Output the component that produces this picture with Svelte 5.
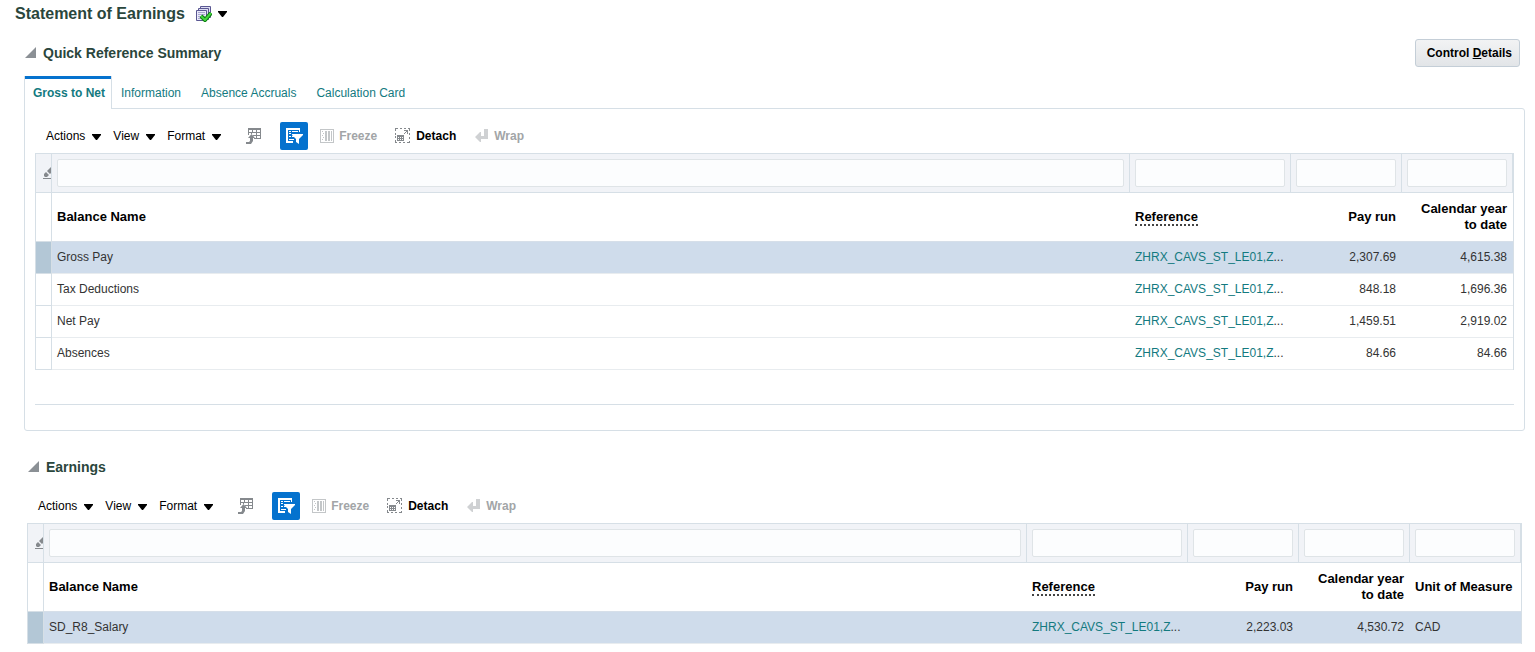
<script>
  const tabs = [
    "Gross to Net",
    "Information",
    "Absence Accruals",
    "Calculation Card",
  ];

  const menus = ["Actions", "View", "Format"];

  const baseColumns = [
    { key: "name", label: "Balance Name", kind: "name" },
    { key: "reference", label: "Reference", kind: "reference" },
    { key: "run", label: "Pay run", kind: "amount" },
    { key: "ytd", label: "Calendar year to date", kind: "amount" },
  ];

  const summary = {
    id: "summary",
    columns: baseColumns,
    rows: [
      { name: "Gross Pay", run: "2,307.69", ytd: "4,615.38" },
      { name: "Tax Deductions", run: "848.18", ytd: "1,696.36" },
      { name: "Net Pay", run: "1,459.51", ytd: "2,919.02" },
      { name: "Absences", run: "84.66", ytd: "84.66" },
    ],
  };

  const earnings = {
    id: "earnings",
    columns: [
      ...baseColumns,
      { key: "unit", label: "Unit of Measure", kind: "unit" },
    ],
    rows: [
      { name: "SD_R8_Salary", run: "2,223.03", ytd: "4,530.72", unit: "CAD" },
    ],
  };

  let activeTab = $state(tabs[0]);
  let selected = $state({ summary: 0, earnings: 0 });
</script>

{#snippet caret()}
  <svg class="caret" width="9" height="6" viewBox="0 0 9 6" aria-hidden="true">
    <path d="M0 0h9v1L5 6H4L0 1z" />
  </svg>
{/snippet}

{#snippet heading(title)}
  <h2>
    <button class="disclosure" aria-label="Collapse {title}">
      <svg width="11" height="11" viewBox="0 0 11 11">
        <path d="M0 11L11 0v11z" fill="#8b9095" />
      </svg>
    </button>
    {title}
  </h2>
{/snippet}

{#snippet toolbar()}
  <div class="toolbar">
    {#each menus as menu}
      <button class="menu">{menu}{@render caret()}</button>
    {/each}
    <button class="export" aria-label="Export">
      <svg width="16" height="16" viewBox="0 0 16 16">
        <path
          d="M2 0h13v11H8v-1h2V8H7V7h3V5H6v1H5V5H3v2H2zM3 2v2h3V2zM7 2v2h3V2zM11 2v2h3V2zM11 5v2h3V5zM11 8v2h3V8z"
          fill="#85898d"
          fill-rule="evenodd"
        />
        <path d="M5.5 6L9 10H7v3l-2 3H0v-2h3l1-1v-3H2z" fill="#85898d" />
      </svg>
    </button>
    <button class="query" aria-label="Query by Example" aria-pressed="true">
      <svg width="17" height="16" viewBox="0 0 17 16">
        <path
          d="M0 0h14v4h-1V2H2v11h5v2H0zM3 3h2v1H3zM6 3h6v1H6zM3 5h2v1H3zM3 8h2v1H3zM6 8h2v1H6zM3 11h5v1H3z"
          fill="#fff"
        />
        <path d="M6 6h11v1l-4 4v5l-3-2v-3L6 7z" fill="#fff" />
      </svg>
    </button>
    <button class="tool" disabled>
      <svg width="14" height="14" viewBox="0 0 14 14" shape-rendering="crispEdges">
        <path d="M.5.5h13v13H.5z" fill="none" stroke="#c3c6c8" />
        <path
          d="M2 2h1v1H2zM3 4h1v1H3zM2 6h1v1H2zM3 8h1v1H3zM2 10h1v1H2zM5 2h2v10H5zM8 2h2v10H8zM11 2h1v10h-1z"
          fill="#c3c6c8"
        />
      </svg>
      Freeze
    </button>
    <button class="tool">
      <svg width="16" height="16" viewBox="0 0 16 16" shape-rendering="crispEdges">
        <path
          d="M0 0h3v1H1v2H0zM5 0h2v1H5zM9 0h2v1H9zM13 0h2v3h-1V1h-1zM14 5h1v2h-1zM14 9h1v2h-1zM14 13h1v2h-3v-1h2zM8 14h2v1H8zM4 14h2v1H4zM0 12h1v2h1v1H0zM0 8h1v2H0zM0 5h1v2H0z"
          fill="#85898d"
        />
        <path
          d="M2 7h7v6H2zM3 9v1h1V9zM5 9v1h1V9zM7 9v1h1V9zM3 11v1h1v-1zM5 11v1h1v-1zM7 11v1h1v-1z"
          fill="#85898d"
          fill-rule="evenodd"
        />
        <path d="M9 2h4v4h-1V4h-1v1h-1v1H9V5h1V4h1V3H9z" fill="#85898d" />
      </svg>
      Detach
    </button>
    <button class="tool" disabled>
      <svg width="15" height="14" viewBox="0 0 15 14">
        <path d="M10 0h4v10H7v3H6L1 8l5-5h1v4h3z" fill="#cfd1d3" />
      </svg>
      Wrap
    </button>
  </div>
{/snippet}

{#snippet balanceTable(table)}
  <table>
    <colgroup>
      <col class="gutter-col" />
      {#each table.columns as column}
        <col class="{column.kind}-col" />
      {/each}
    </colgroup>
    <thead>
      <tr class="filters">
        <td class="gutter">
          <button class="clear" aria-label="Clear filters">
            <svg width="14" height="12" viewBox="0 0 14 12">
              <path d="M0 11h9v1H0z" fill="#85898d" />
              <path
                d="M1 7l2-2 3 3-2 2H2L1 9zM4 4l5-5 3 3-5 5z"
                fill="#85898d"
              />
            </svg>
          </button>
        </td>
        {#each table.columns as column}
          <td><input type="text" aria-label="Filter by {column.label}" /></td>
        {/each}
      </tr>
      <tr class="labels">
        <td class="gutter"></td>
        {#each table.columns as column}
          <th class={column.kind} scope="col"><span>{column.label}</span></th>
        {/each}
      </tr>
    </thead>
    <tbody>
      {#each table.rows as row, i}
        <tr
          class:selected={selected[table.id] === i}
          onclick={() => (selected[table.id] = i)}
        >
          <td class="gutter"></td>
          {#each table.columns as column}
            <td class={column.kind}>
              {#if column.kind === "reference"}
                <a href="#reference">ZHRX_CAVS_ST_LE01,Z</a>...
              {:else}
                {row[column.key]}
              {/if}
            </td>
          {/each}
        </tr>
      {/each}
    </tbody>
  </table>
{/snippet}

<main>
  <header>
    <h1>Statement of Earnings</h1>
    <button class="report" aria-label="Report options">
      <svg width="16" height="16" viewBox="0 0 16 16">
        <path d="M4.5.5h10v11h-10z" fill="#dcdcf2" stroke="#5a5792" />
        <path d="M2.5 2.5h10v11h-10z" fill="#dcdcf2" stroke="#5a5792" />
        <path d="M.5 4.5h10v10H.5z" fill="#e9e9f9" stroke="#5a5792" />
        <path
          d="M2 6.5h7M2 8.5h7M2 10.5h7M2 12.500h7"
          stroke="#a9a7d0"
        />
        <path
          d="M5 10l4 4 6-7"
          fill="none"
          stroke="#0b7a10"
          stroke-width="4"
        />
        <path
          d="M5 10l4 4 6-7"
          fill="none"
          stroke="#43d63d"
          stroke-width="2"
        />
      </svg>
      {@render caret()}
    </button>
  </header>

  <section class="summary">
    <div class="section-head">
      {@render heading("Quick Reference Summary")}
      <button class="details">Control <u>D</u>etails</button>
    </div>
    <div class="tabs" role="tablist">
      {#each tabs as tab}
        <button
          role="tab"
          class:active={activeTab === tab}
          aria-selected={activeTab === tab}
          onclick={() => (activeTab = tab)}
        >
          {tab}
        </button>
      {/each}
    </div>
    <div class="panel">
      {@render toolbar()}
      {@render balanceTable(summary)}
      <div class="status"></div>
    </div>
  </section>

  <section class="earnings">
    {@render heading("Earnings")}
    {@render toolbar()}
    {@render balanceTable(earnings)}
  </section>
</main>

<style>
  :global(body) {
    background: #fff;
  }

  main {
    font-family: "Liberation Sans", Arial, sans-serif;
    font-size: 12px;
    line-height: 16px;
    color: #333;
    padding-bottom: 8px;
  }

  button {
    font: inherit;
    color: #000;
    background: none;
    border: 0;
    padding: 0;
    cursor: pointer;
  }

  svg {
    display: block;
    flex: none;
  }

  header {
    display: flex;
    align-items: center;
    gap: 11px;
    height: 28px;
    padding-left: 15px;
  }

  h1,
  h2 {
    margin: 0;
    color: #2a463c;
    font-weight: bold;
  }

  h1 {
    font-size: 16px;
    line-height: 20px;
  }

  h2 {
    display: flex;
    align-items: center;
    gap: 7px;
    font-size: 14px;
    line-height: 20px;
  }

  .report {
    display: flex;
    align-items: center;
    gap: 6px;
  }

  .summary {
    padding: 11px 10px 0 24px;
  }

  .section-head {
    display: flex;
    justify-content: space-between;
    align-items: center;
    padding: 0 5px 0 1px;
  }

  .disclosure {
    margin-bottom: 2px;
  }

  .details {
    height: 28px;
    padding: 0 7px 0 11px;
    font-weight: bold;
    background: linear-gradient(#f2f3f4, #e2e5e8);
    border: 1px solid #c4ced7;
    border-radius: 3px;
  }

  .tabs {
    display: flex;
    align-items: stretch;
    height: 32px;
    margin-top: 9px;
  }

  .tabs button {
    height: 33px;
    padding: 0 11px 0 9px;
    color: #137a7f;
  }

  .tabs .active {
    position: relative;
    padding: 0 6px 0 8px;
    font-weight: bold;
    background: #fff;
    border: solid #d6dfe6;
    border-width: 0 1px;
    box-shadow: inset 0 3px #0572ce;
  }

  .panel {
    padding: 13px 10px 25px;
    border: 1px solid #d6dfe6;
    border-radius: 0 3px 3px 3px;
  }

  .status {
    height: 34px;
    border-bottom: 1px solid #d6dfe6;
  }

  .toolbar {
    display: flex;
    align-items: center;
    gap: 12px;
    height: 28px;
    margin-bottom: 3px;
    padding-left: 11px;
  }

  .menu {
    display: flex;
    align-items: center;
    gap: 7px;
  }

  .menu .caret {
    margin-top: 2px;
  }

  .export {
    margin-left: 13px;
  }

  .query {
    display: grid;
    place-items: center;
    width: 28px;
    height: 28px;
    margin-left: 6px;
    background: #0572ce;
    border-radius: 2px;
  }

  .tool {
    display: flex;
    align-items: center;
    gap: 5px;
    margin-right: 6px;
    font-weight: bold;
  }

  .tool:disabled {
    color: #a2a5a7;
    cursor: default;
  }

  table {
    width: 100%;
    table-layout: fixed;
    border: solid #d6dfe6;
    border-width: 1px 1px 0;
    border-collapse: separate;
    border-spacing: 0;
  }

  .gutter-col {
    width: 16px;
  }

  .reference-col {
    width: 161px;
  }

  .amount-col,
  .unit-col {
    width: 111px;
  }

  td,
  th {
    box-sizing: border-box;
    padding: 0 5px;
    text-align: left;
    white-space: nowrap;
  }

  td.gutter {
    padding: 0;
    overflow: hidden;
    border-right: 1px solid #d6dfe6;
    border-bottom: 1px solid #d6dfe6;
  }

  .clear {
    display: block;
    margin-left: 7px;
  }

  .filters td {
    height: 39px;
    background: #f1f3f7;
    border-right: 1px solid #d6dfe6;
    border-bottom: 1px solid #d6dfe6;
  }

  input {
    display: block;
    box-sizing: border-box;
    width: 100%;
    height: 28px;
    padding: 0 5px;
    font: inherit;
    background: #fcfdfe;
    border: 1px solid #dfe4e7;
    border-radius: 2px;
  }

  th {
    height: 49px;
    font-size: 13px;
    color: #000;
    border-bottom: 1px solid #d6dfe9;
  }

  th.amount {
    white-space: normal;
  }

  .amount {
    padding-right: 6px;
    text-align: right;
  }

  th.reference span {
    border-bottom: 2px dotted #444;
  }

  tbody td {
    height: 32px;
    padding-bottom: 2px;
    border-bottom: 1px solid #e8ecef;
  }

  .selected td {
    background: #cfdceb;
  }

  .selected td.gutter {
    background: #b3c7d6;
  }

  a {
    color: #137a7f;
    text-decoration: none;
  }

  .earnings {
    padding: 26px 13px 0 27px;
  }

  .earnings h2 {
    padding-left: 1px;
  }

  .earnings .toolbar {
    margin-top: 15px;
  }
</style>
